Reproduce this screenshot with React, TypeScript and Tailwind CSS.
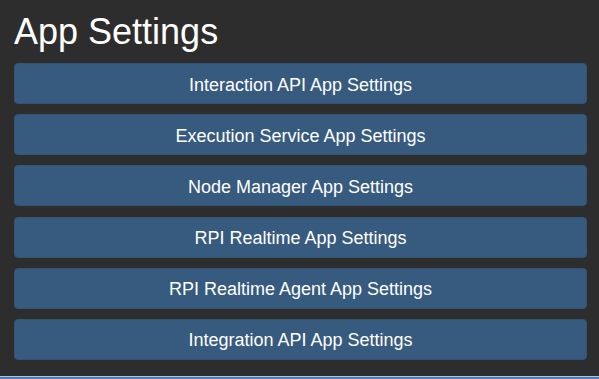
const items = [
  "Interaction API App Settings",
  "Execution Service App Settings",
  "Node Manager App Settings",
  "RPI Realtime App Settings",
  "RPI Realtime Agent App Settings",
  "Integration API App Settings",
];

export default function App() {
  return (
    <div
      className="flex h-[379px] w-[599px] flex-col bg-[#2d2d2d] text-white"
      style={{ fontFamily: '"Liberation Sans", Arial, sans-serif' }}
    >
      <div className="flex-1 pl-[14px] pr-[12px] pt-[10px]">
        <h1 className="mb-[10px] text-[36px] leading-[43px] font-normal">App Settings</h1>
        <div className="flex flex-col gap-[10.2px]">
          {items.map((label) => (
            <button
              key={label}
              className="h-[41px] w-full rounded-[4px] border border-[#335377] bg-[#375a7f] pt-[3px] text-[18px] text-white"
            >
              {label}
            </button>
          ))}
        </div>
      </div>
      <div className="h-px bg-[#bfc3c8]" />
      <div className="h-[2px] bg-[#4a7cc8]" />
    </div>
  );
}
